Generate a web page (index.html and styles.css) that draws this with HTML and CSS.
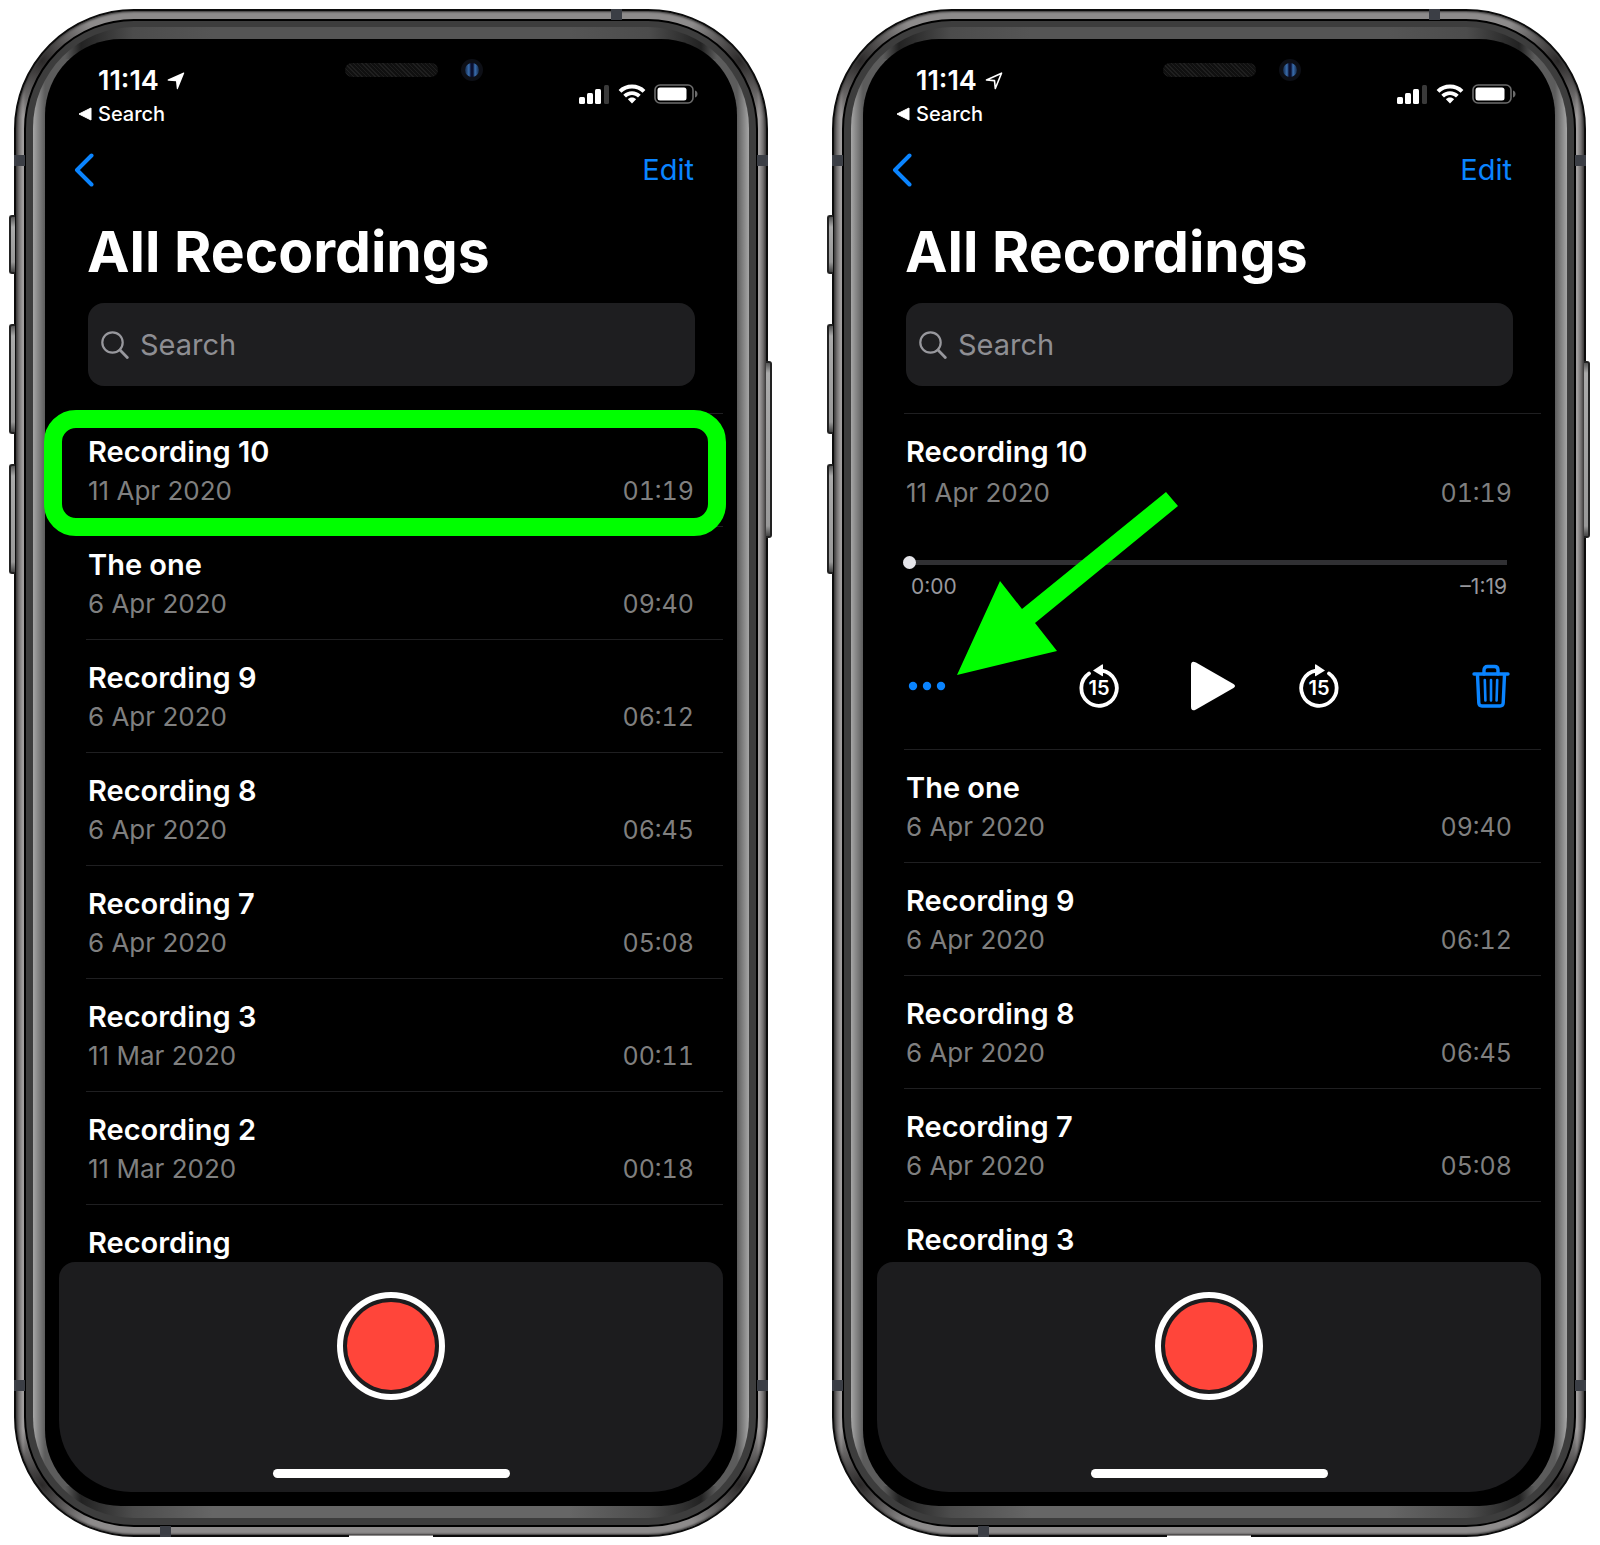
FILE: index.html
```html
<!DOCTYPE html>
<html lang="en">
<head>
    <meta charset="UTF-8">
    <meta name="viewport" content="width=device-width, initial-scale=1.0">
    <title>All Recordings</title>
    <link rel="stylesheet" href="styles.css">
</head>
<body>
    <!-- Shared icons -->
    <svg class="sprite" width="0" height="0" aria-hidden="true">
        <symbol id="icon-signal" viewBox="0 0 31 20">
            <rect x="0" y="13" width="6" height="7" rx="1.5" fill="#fff"/>
            <rect x="8" y="9" width="6" height="11" rx="1.5" fill="#fff"/>
            <rect x="16" y="5" width="6" height="15" rx="1.5" fill="#fff"/>
            <rect x="25" y="1" width="5" height="19" rx="1.5" fill="#3a3a3a"/>
        </symbol>
        <symbol id="icon-wifi" viewBox="0 0 28 20">
            <path d="M14 0.5C8.800 0.500 4 2.500 0.600 5.900L3.400 8.800C6.200 6 10 4.500 14 4.500s7.800 1.500 10.600 4.300l2.800-2.900C24 2.500 19.200 0.500 14 0.500z" fill="#fff"/>
            <path d="M14 7.200c-3.300 0-6.400 1.300-8.700 3.500l2.700 2.800c1.600-1.500 3.700-2.400 6-2.400s4.400 0.900 6 2.400l2.700-2.800C20.400 8.500 17.300 7.200 14 7.200z" fill="#fff"/>
            <path d="M14 13.600c-1.600 0-3 0.600-4.100 1.600L14 19.500l4.100-4.300c-1.100-1-2.500-1.600-4.100-1.600z" fill="#fff"/>
        </symbol>
        <symbol id="icon-battery" viewBox="0 0 44 20">
            <rect x="1" y="1" width="38" height="18" rx="5" fill="none" stroke="#6c6c6c" stroke-width="1.6"/>
            <rect x="3.500" y="3.500" width="29" height="13" rx="2.500" fill="#fff"/>
            <path d="M41 6.500c1.600 0.500 2.500 1.800 2.500 3.500s-0.900 3-2.500 3.500z" fill="#6c6c6c"/>
        </symbol>
        <symbol id="icon-back" viewBox="0 0 20 34">
            <path d="M17.500 2.500L3 17l14.500 14.500" fill="none" stroke="#0a84ff" stroke-width="4" stroke-linecap="round" stroke-linejoin="round"/>
        </symbol>
        <symbol id="icon-search" viewBox="0 0 28 28">
            <circle cx="11.500" cy="11.500" r="10.200" fill="none" stroke="#98989d" stroke-width="2.200"/>
            <path d="M19 19l7.300 7.500" stroke="#98989d" stroke-width="2.800" stroke-linecap="round"/>
        </symbol>
    </svg>

    <main class="phones">
        <section class="phone">
            <span class="key key-mute"></span>
            <span class="key key-up"></span>
            <span class="key key-down"></span>
            <span class="key key-power"></span>
            <span class="band band-top"></span>
            <span class="band band-bottom"></span>
            <span class="band band-left"></span>
            <span class="band band-right"></span>
            <span class="band band-left band-low"></span>
            <span class="band band-right band-low"></span>
            <span class="port"></span>
            <div class="bezel">
                <div class="glass">
                    <div class="screen">
                        <span class="speaker"></span>
                        <span class="camera"></span>
                        <header class="status">
                            <div class="status-left">
                                <div class="clock">
                                    <span>11:14</span>
                                    <svg width="18" height="18" viewBox="0 0 18 18" aria-hidden="true"><path d="M0.800 7.600L16.500 0.500q1-0.300 0.700 0.700L10.800 17q-0.700 0.800-1-0.300L9 9.200 1.300 8.800q-1.300-0.400-0.500-1.200z" fill="#fff"/></svg>
                                </div>
                                <a class="return" href="#"><svg width="14" height="14" viewBox="0 0 14 14" aria-hidden="true"><path d="M13 1v12L1 7z" fill="#fff" stroke="#fff" stroke-linejoin="round"/></svg>Search</a>
                            </div>
                            <div class="status-icons">
                                <svg width="31" height="20"><use href="#icon-signal"/></svg>
                                <svg width="28" height="20"><use href="#icon-wifi"/></svg>
                                <svg width="44" height="20"><use href="#icon-battery"/></svg>
                            </div>
                        </header>
                        <nav class="nav">
                            <a href="#" aria-label="Back"><svg width="20" height="34"><use href="#icon-back"/></svg></a>
                            <button class="edit" type="button">Edit</button>
                        </nav>
                        <h1>All Recordings</h1>
                        <label class="search">
                            <svg width="28" height="28"><use href="#icon-search"/></svg>
                            <input type="search" placeholder="Search" aria-label="Search">
                        </label>
                        <ul class="list">
                            <li class="row row-marked">
                                <h2>Recording 10</h2>
                                <p><span>11 Apr 2020</span><time>01:19</time></p>
                            </li>
                            <li class="row">
                                <h2>The one</h2>
                                <p><span>6 Apr 2020</span><time>09:40</time></p>
                            </li>
                            <li class="row">
                                <h2>Recording 9</h2>
                                <p><span>6 Apr 2020</span><time>06:12</time></p>
                            </li>
                            <li class="row">
                                <h2>Recording 8</h2>
                                <p><span>6 Apr 2020</span><time>06:45</time></p>
                            </li>
                            <li class="row">
                                <h2>Recording 7</h2>
                                <p><span>6 Apr 2020</span><time>05:08</time></p>
                            </li>
                            <li class="row">
                                <h2>Recording 3</h2>
                                <p><span>11 Mar 2020</span><time>00:11</time></p>
                            </li>
                            <li class="row">
                                <h2>Recording 2</h2>
                                <p><span>11 Mar 2020</span><time>00:18</time></p>
                            </li>
                            <li class="row">
                                <h2>Recording</h2>
                            </li>
                        </ul>
                        <footer class="dock">
                            <button class="record" type="button" aria-label="Record"></button>
                            <span class="home"></span>
                        </footer>
                    </div>
                </div>
            </div>
        </section>

        <section class="phone">
            <span class="key key-mute"></span>
            <span class="key key-up"></span>
            <span class="key key-down"></span>
            <span class="key key-power"></span>
            <span class="band band-top"></span>
            <span class="band band-bottom"></span>
            <span class="band band-left"></span>
            <span class="band band-right"></span>
            <span class="band band-left band-low"></span>
            <span class="band band-right band-low"></span>
            <span class="port"></span>
            <div class="bezel">
                <div class="glass">
                    <div class="screen">
                        <span class="speaker"></span>
                        <span class="camera"></span>
                        <header class="status">
                            <div class="status-left">
                                <div class="clock">
                                    <span>11:14</span>
                                    <svg width="18" height="18" viewBox="0 0 18 18" aria-hidden="true"><path d="M1.500 8L16.500 1.200 10.300 16.500 9.500 8.600z" fill="none" stroke="#fff" stroke-width="1.600" stroke-linejoin="round"/></svg>
                                </div>
                                <a class="return" href="#"><svg width="14" height="14" viewBox="0 0 14 14" aria-hidden="true"><path d="M13 1v12L1 7z" fill="#fff" stroke="#fff" stroke-linejoin="round"/></svg>Search</a>
                            </div>
                            <div class="status-icons">
                                <svg width="31" height="20"><use href="#icon-signal"/></svg>
                                <svg width="28" height="20"><use href="#icon-wifi"/></svg>
                                <svg width="44" height="20"><use href="#icon-battery"/></svg>
                            </div>
                        </header>
                        <nav class="nav">
                            <a href="#" aria-label="Back"><svg width="20" height="34"><use href="#icon-back"/></svg></a>
                            <button class="edit" type="button">Edit</button>
                        </nav>
                        <h1>All Recordings</h1>
                        <label class="search">
                            <svg width="28" height="28"><use href="#icon-search"/></svg>
                            <input type="search" placeholder="Search" aria-label="Search">
                        </label>
                        <ul class="list">
                            <li class="row row-open">
                                <h2>Recording 10</h2>
                                <p><span>11 Apr 2020</span><time>01:19</time></p>
                                <input class="scrubber" type="range" min="0" max="79" value="0" aria-label="Position">
                                <div class="times"><span>0:00</span><span>–1:19</span></div>
                                <div class="controls">
                                    <button class="more" type="button" aria-label="More">
                                        <svg width="38" height="10" viewBox="0 0 38 10"><g fill="#0a84ff"><circle cx="5" cy="5" r="4.200"/><circle cx="19" cy="5" r="4.200"/><circle cx="33" cy="5" r="4.200"/></g></svg>
                                    </button>
                                    <div class="transport">
                                        <button type="button" aria-label="Back 15 seconds">
                                            <svg width="40" height="46" viewBox="0 0 40 46">
                                                <path d="M10 10.500A17.700 17.700 0 1 0 23 7.600" fill="none" stroke="#fff" stroke-width="3.800" stroke-linecap="round"/>
                                                <path d="M14 7.400L23 1.500q1-0.500 1 0.600V12.500q0 1.200-1 0.600z" fill="#fff"/>
                                                <text x="20" y="32" text-anchor="middle" class="seconds">15</text>
                                            </svg>
                                        </button>
                                        <button type="button" aria-label="Play">
                                            <svg width="52" height="50" viewBox="0 0 52 50"><path d="M8 4.500Q8-1 13 1.600L50.500 23q3 2 0 4L13 48.400Q8 51 8 45.500z" fill="#fff"/></svg>
                                        </button>
                                        <button type="button" aria-label="Forward 15 seconds">
                                            <svg width="40" height="46" viewBox="0 0 40 46">
                                                <path d="M30 10.500A17.700 17.700 0 1 1 17 7.600" fill="none" stroke="#fff" stroke-width="3.800" stroke-linecap="round"/>
                                                <path d="M26 7.400L17 1.500q-1-0.500-1 0.600V12.500q0 1.200 1 0.600z" fill="#fff"/>
                                                <text x="20" y="32" text-anchor="middle" class="seconds">15</text>
                                            </svg>
                                        </button>
                                    </div>
                                    <button class="trash" type="button" aria-label="Delete">
                                        <svg width="38" height="44" viewBox="0 0 38 44" fill="none" stroke="#0a84ff" stroke-linecap="round" stroke-linejoin="round">
                                            <path d="M2 10h34M5.500 11l1.300 28q0.200 3 3.200 3h18q3 0 3.200-3L32.500 11" stroke-width="3.400"/>
                                            <path d="M12 10V6q0-3.500 3.500-3.500h7Q26 2.500 26 6v4" stroke-width="3.400"/>
                                            <path d="M12.800 16l0.600 20.500M19 16v20.500M25.200 16l-0.600 20.500" stroke-width="2.600"/>
                                        </svg>
                                    </button>
                                </div>
                                <svg class="pointer" width="221" height="184" viewBox="0 0 221 184" aria-hidden="true">
                                    <polygon points="209,1 221,15 78,132 100,160 0,184 43,90 65,118" fill="#00ff00"/>
                                </svg>
                            </li>
                            <li class="row">
                                <h2>The one</h2>
                                <p><span>6 Apr 2020</span><time>09:40</time></p>
                            </li>
                            <li class="row">
                                <h2>Recording 9</h2>
                                <p><span>6 Apr 2020</span><time>06:12</time></p>
                            </li>
                            <li class="row">
                                <h2>Recording 8</h2>
                                <p><span>6 Apr 2020</span><time>06:45</time></p>
                            </li>
                            <li class="row">
                                <h2>Recording 7</h2>
                                <p><span>6 Apr 2020</span><time>05:08</time></p>
                            </li>
                            <li class="row">
                                <h2>Recording 3</h2>
                            </li>
                        </ul>
                        <footer class="dock">
                            <button class="record" type="button" aria-label="Record"></button>
                            <span class="home"></span>
                        </footer>
                    </div>
                </div>
            </div>
        </section>
    </main>
</body>
</html>
```
FILE: styles.css
```css
* {
    box-sizing: border-box;
}

/* Page styling */
body {
    margin: 0;
    background: #fff;
    color: #fff;
    font-family: Inter, "Liberation Sans", sans-serif;
}

h1, h2, p, ul {
    margin: 0;
    padding: 0;
}

svg {
    display: block;
    flex: none;
}

button {
    border: none;
    padding: 0;
    background: none;
    color: inherit;
    font-family: inherit;
    cursor: pointer;
}

a {
    color: inherit;
    text-decoration: none;
}

.sprite {
    position: absolute;
}

.phones {
    display: grid;
    grid-template-columns: 1fr 1fr;
    grid-template-rows: 100%;
    gap: 64px;
    height: 100vh;
    padding: 9px 14px 8px;
}

/* Phone body: steel frame, dark seam, curved glass */
.phone {
    position: relative;
    padding: 8px;
    border: 2px solid #0c0c0c;
    border-radius: 120px;
    background:
        radial-gradient(circle at 26px 50px, #2b2929, transparent 60px),
        radial-gradient(circle at calc(100% - 26px) 50px, #2b2929, transparent 60px),
        radial-gradient(circle at 26px calc(100% - 50px), #2b2929, transparent 60px),
        radial-gradient(circle at calc(100% - 26px) calc(100% - 50px), #2b2929, transparent 60px),
        linear-gradient(90deg, #4c4a4a, #a5a2a2 7px, #8d8b8b 10px, #8d8b8b calc(100% - 10px), #a5a2a2 calc(100% - 7px), #4c4a4a);
    box-shadow: inset 0 0 2px 1px #3c3b3b;
}

.bezel {
    height: 100%;
    padding: 6px 7px 7px;
    border: 2px solid #000;
    border-radius: 110px;
    background: #3d3d3d;
}

.glass {
    height: 100%;
    padding: 12px;
    border-radius: 101px;
    background:
        linear-gradient(90deg, transparent 32px, #222 48px, #4c4c4c 100px, #555 180px, #555 calc(100% - 180px), #4c4c4c calc(100% - 100px), #222 calc(100% - 48px), transparent calc(100% - 32px)) top / 100% 32px no-repeat,
        linear-gradient(90deg, transparent 32px, #222 48px, #4c4c4c 100px, #666 180px, #666 calc(100% - 180px), #4c4c4c calc(100% - 100px), #222 calc(100% - 48px), transparent calc(100% - 32px)) bottom / 100% 32px no-repeat,
        linear-gradient(90deg, #a6a6a6, #5c5c5c 12px, #5c5c5c calc(100% - 12px), #a6a6a6);
}

.screen {
    position: relative;
    display: flex;
    flex-direction: column;
    height: 100%;
    border-radius: 76px;
    background: #000;
}

/* Side keys and antenna bands on the frame */
.key {
    position: absolute;
    left: -7px;
    width: 6px;
    height: 110px;
    border: 2px solid #222;
    border-right-width: 0;
    border-radius: 3px 0 0 3px;
    background: linear-gradient(#555, #aaa 10px, #999 calc(100% - 10px), #444);
}

.key-mute {
    top: 204px;
    height: 59px;
}

.key-up {
    top: 313px;
}

.key-down {
    top: 453px;
}

.key-power {
    top: 350px;
    right: -6px;
    left: auto;
    height: 177px;
    border-width: 2px 2px 2px 0;
    border-radius: 0 3px 3px 0;
}

.band {
    position: absolute;
    width: 11px;
    height: 11px;
    background: #3b3e45;
}

.band-top {
    top: -2px;
    right: 144px;
}

.band-bottom {
    bottom: -2px;
    left: 144px;
}

.band-left {
    top: 144px;
    left: -2px;
}

.band-right {
    top: 144px;
    right: -2px;
}

.band-low {
    top: auto;
    bottom: 144px;
}

.port {
    position: absolute;
    bottom: -2px;
    left: 50%;
    width: 84px;
    height: 2px;
    margin-left: -42px;
    background: linear-gradient(#8d8b8b 50%, #fff 50%);
}

.speaker {
    position: absolute;
    top: 24px;
    left: 50%;
    width: 93px;
    height: 14px;
    margin-left: -46px;
    border-radius: 7px;
    background: repeating-linear-gradient(45deg, #1f1f1f 0 1px, #101010 1px 3px);
}

.camera {
    position: absolute;
    top: 20px;
    left: 50%;
    width: 22px;
    height: 22px;
    margin-left: 70px;
    border: 4px solid #0d0f16;
    border-radius: 50%;
    background: linear-gradient(90deg, #15294a, #3a6fb0 4px, #0b1030 6px, #0b1030 8px, #3a6fb0 10px, #15294a);
}

/* Status bar */
.status {
    display: flex;
    justify-content: space-between;
    align-items: center;
    padding: 25px 39px 0 33px;
}

.clock {
    display: flex;
    align-items: center;
    gap: 8px;
    padding-left: 20px;
    font-size: 27px;
    font-weight: 600;
    line-height: 34px;
}

.return {
    display: flex;
    align-items: center;
    gap: 6px;
    margin-top: 2px;
    font-size: 20px;
    font-weight: 500;
    line-height: 28px;
}

.status-icons {
    display: flex;
    gap: 8px;
    padding-bottom: 4px;
}

/* Navigation */
.nav {
    display: flex;
    justify-content: space-between;
    align-items: center;
    padding: 24px 43px 0 29px;
}

.edit {
    color: #0a84ff;
    font-size: 29px;
    line-height: 36px;
}

h1 {
    margin: 29px 42px 16px 42px;
    font-size: 57px;
    font-weight: 700;
    line-height: 70px;
    white-space: nowrap;
}

.search {
    display: flex;
    flex: none;
    align-items: center;
    gap: 11px;
    height: 83px;
    margin: 0 42px 27px 43px;
    padding: 0 13px;
    border-radius: 16px;
    background: #1e1e20;
}

.search input {
    flex: 1;
    min-width: 0;
    padding: 0;
    border: none;
    outline: none;
    background: none;
    color: #fff;
    font-family: inherit;
    font-size: 29px;
}

.search input::placeholder {
    color: #8e8e93;
    opacity: 1;
}

/* Recordings */
.list {
    flex: 1;
    min-height: 0;
    margin: 0 14px 0 0;
    padding-left: 41px;
    list-style: none;
    clip-path: inset(-20px -20px 0 -20px);
}

.row {
    position: relative;
    padding: 20px 29px 19px 2px;
    border-top: 1px solid #1f1f21;
}

.row h2 {
    font-size: 29px;
    font-weight: 600;
    line-height: 36px;
}

.row p {
    display: flex;
    justify-content: space-between;
    margin-top: 5px;
    color: #7f7f7f;
    font-size: 26px;
    line-height: 32px;
}

.row time {
    font-size: 25px;
    font-variant-numeric: tabular-nums;
}

.row-marked::after {
    content: "";
    position: absolute;
    z-index: 1;
    inset: -4px -3px -10px -42px;
    border: 18px solid #00ff00;
    border-radius: 32px;
}

.row-open {
    padding-bottom: 38px;
}

.row-open p {
    margin-top: 7px;
}

/* Player */
.scrubber {
    display: block;
    appearance: none;
    width: calc(100% - 2px);
    height: 14px;
    margin: 46px 0 4px -3px;
    background: linear-gradient(#303033, #303033) center / 100% 5px no-repeat;
}

.scrubber::-webkit-slider-thumb {
    appearance: none;
    width: 13px;
    height: 13px;
    border-radius: 50%;
    background: #e5e5ea;
}

.times {
    display: flex;
    justify-content: space-between;
    padding: 0 5px;
    color: #98989d;
    font-size: 21px;
    line-height: 28px;
}

.controls {
    display: grid;
    grid-template-columns: 1fr auto 1fr;
    align-items: center;
    margin-top: 60px;
    padding: 0 2px;
}

.more {
    justify-self: start;
}

.transport {
    display: flex;
    align-items: center;
    gap: 64px;
}

.trash {
    justify-self: end;
}

.seconds {
    fill: #fff;
    font-size: 20px;
    font-weight: 600;
}

.pointer {
    position: absolute;
    top: 77px;
    left: 53px;
}

/* Record panel */
.dock {
    display: flex;
    flex: none;
    flex-direction: column;
    justify-content: space-between;
    align-items: center;
    height: 230px;
    margin: 0 14px 14px;
    padding: 30px 0 14px;
    border-radius: 16px 16px 72px 72px;
    background: #1c1c1e;
}

.record {
    width: 108px;
    height: 108px;
    padding: 4px;
    border: 6px solid #fff;
    border-radius: 50%;
    background: #ff453a content-box;
}

.home {
    width: 237px;
    height: 9px;
    border-radius: 5px;
    background: #fff;
}
```
